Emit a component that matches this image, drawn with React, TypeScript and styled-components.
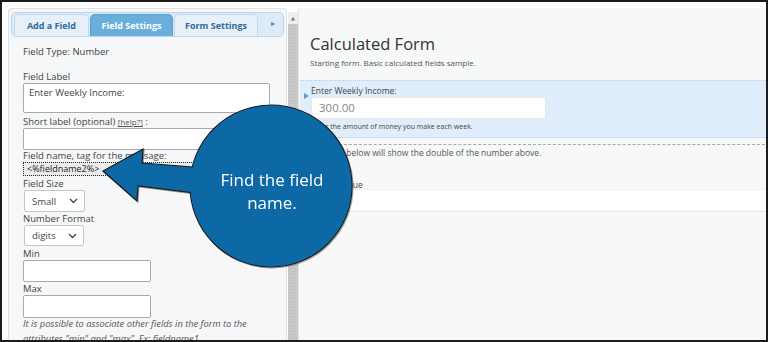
import styled, { createGlobalStyle } from "styled-components";

const GlobalStyle = createGlobalStyle`
  html, body {
    margin: 0;
    padding: 0;
    background: #fff;
  }
  * {
    box-sizing: border-box;
  }
`;

const tabs = [
  { label: "Add a Field", width: 75 },
  { label: "Field Settings", width: 83 },
  { label: "Form Settings", width: 84 },
];

export default function App() {
  return (
    <>
      <GlobalStyle />
      <Frame>
        <LeftPanel>
          <Builder>
            <TabBar>
              {tabs.map((t) => (
                <Tab key={t.label} $width={t.width} $active={t.label === "Field Settings"}>
                  {t.label}
                </Tab>
              ))}
              <TabArrow>▸</TabArrow>
            </TabBar>
            <Settings>
              <FieldType>Field Type: Number</FieldType>
              <Group $top={13}>
                <Label>Field Label</Label>
                <TextArea>Enter Weekly Income:</TextArea>
              </Group>
              <Group $top={3}>
                <Label>
                  Short label (optional) <HelpLink>[help?]</HelpLink> :
                </Label>
                <Input $width={247} $height={22} />
              </Group>
              <Group $top={0}>
                <Label>Field name, tag for the message:</Label>
                <TagBox>&lt;%fieldname2%&gt;</TagBox>
              </Group>
              <Group $top={2}>
                <Label>Field Size</Label>
                <Select $width={61} $height={22}>
                  Small
                  <Chevron />
                </Select>
              </Group>
              <Group $top={1}>
                <Label>Number Format</Label>
                <Select $width={60} $height={21}>
                  digits
                  <Chevron />
                </Select>
              </Group>
              <Group $top={2}>
                <Label>Min</Label>
                <Input $width={128} $height={22} />
              </Group>
              <Group $top={1}>
                <Label>Max</Label>
                <Input $width={128} $height={23} />
              </Group>
              <Note>
                It is possible to associate other fields in the form to the
                attributes "min" and "max". Ex: fieldname1
              </Note>
            </Settings>
          </Builder>
          <Scrollbar>
            <ScrollUp>▲</ScrollUp>
            <ScrollTrack />
          </Scrollbar>
        </LeftPanel>

        <Preview>
          <FormTitle>Calculated Form</FormTitle>
          <FormDesc>Starting form. Basic calculated fields sample.</FormDesc>
          <ActiveField>
            <FieldMarker />
            <PreviewLabel>Enter Weekly Income:</PreviewLabel>
            <PreviewInput>300.00</PreviewInput>
            <PreviewHelp>Enter the amount of money you make each week.</PreviewHelp>
          </ActiveField>
          <Separator />
          <PreviewText>
            The field below will show the double of the number above.
          </PreviewText>
          <PreviewLabel $top={20}>Double Value</PreviewLabel>
          <WideInput />
        </Preview>

        <Callout>
          <svg width="768" height="342" viewBox="0 0 768 342">
            <circle cx="271" cy="186" r="81" fill="#0c69a6" stroke="#1b1b1b" strokeWidth="1.2" />
            <polygon
              points="103,171 143,149 142,163 205,168 203,194 138,186 137,201"
              fill="#0c69a6"
              stroke="#1b1b1b"
              strokeWidth="1.2"
              strokeLinejoin="miter"
            />
            <circle cx="271" cy="186" r="80.4" fill="#0c69a6" />
          </svg>
          <CalloutText>
            Find the field
            <br />
            name.
          </CalloutText>
        </Callout>
      </Frame>
    </>
  );
}

const Frame = styled.div`
  position: relative;
  width: 768px;
  height: 342px;
  border: 2px solid #1c1c1c;
  background: #fff;
  display: flex;
  padding: 6px 0 0 6px;
  overflow: hidden;
  font-family: "Open Sans", "DejaVu Sans", sans-serif;
  color: #444;
`;

const LeftPanel = styled.div`
  width: 290px;
  display: flex;
  flex-shrink: 0;
`;

const Builder = styled.div`
  width: 279px;
  background: #f5f7f8;
  border: 1px solid #dde2e5;
  border-bottom: none;
  border-radius: 4px 4px 0 0;
  padding: 3px 2px 0 2px;
`;

const TabBar = styled.div`
  height: 25px;
  display: flex;
  align-items: flex-end;
  gap: 1px;
  padding: 0 0 0 2px;
  background: #dcebf7;
  border: 1px solid #bcd7ec;
  border-radius: 5px;
  position: relative;
`;

const Tab = styled.div<{ $active?: boolean; $width: number }>`
  width: ${(p) => p.$width}px;
  height: 22px;
  display: flex;
  align-items: center;
  justify-content: center;
  font-size: 9px;
  font-weight: 700;
  color: ${(p) => (p.$active ? "#fff" : "#2f6b9c")};
  background: ${(p) => (p.$active ? "#6aafdc" : "#e6f0f9")};
  border: 1px solid ${(p) => (p.$active ? "#5a9fcf" : "#c3daee")};
  border-bottom: none;
  border-radius: 5px 5px 0 0;
`;

const TabArrow = styled.span`
  position: absolute;
  right: 8px;
  top: 4px;
  font-size: 8px;
  color: #4f86b5;
`;

const Settings = styled.div`
  padding: 8px 0 0 12px;
  display: flex;
  flex-direction: column;
`;

const FieldType = styled.div`
  font-size: 9.5px;
  line-height: 13px;
`;

const Group = styled.div<{ $top: number }>`
  margin-top: ${(p) => p.$top}px;
  display: flex;
  flex-direction: column;
  align-items: flex-start;
`;

const Label = styled.div`
  font-size: 9.5px;
  line-height: 12px;
  color: #444;
`;

const HelpLink = styled.span`
  text-decoration: underline;
  font-size: 8px;
  color: #555;
`;

const TextArea = styled.div`
  width: 247px;
  height: 30px;
  background: #fff;
  border: 1px solid #a9a9a9;
  border-radius: 2px;
  padding: 2px 5px;
  font-size: 9.5px;
  color: #444;
`;

const Input = styled.div<{ $width: number; $height: number }>`
  width: ${(p) => p.$width}px;
  height: ${(p) => p.$height}px;
  background: #fff;
  border: 1px solid #a9a9a9;
  border-radius: 2px;
`;

const TagBox = styled.div`
  width: 247px;
  height: 14px;
  background: #eaebec;
  border: 1px dotted #222;
  padding: 0 3px;
  font-size: 9px;
  line-height: 12px;
  color: #222;
`;

const Select = styled.div<{ $width: number; $height: number }>`
  width: ${(p) => p.$width}px;
  height: ${(p) => p.$height}px;
  margin-left: 1px;
  background: #fff;
  border: 1px solid #c5c5c5;
  border-radius: 2px;
  display: flex;
  align-items: center;
  justify-content: space-between;
  padding: 0 6px 0 7px;
  font-size: 9.5px;
  color: #444;
`;

const Chevron = () => (
  <svg width="9" height="6" viewBox="0 0 9 6">
    <path d="M1 1 L4.5 4.5 L8 1" fill="none" stroke="#444" strokeWidth="1.3" />
  </svg>
);

const Note = styled.div`
  margin-top: -2px;
  font-size: 9.3px;
  line-height: 15px;
  font-style: italic;
  color: #555;
  width: 262px;
`;

const Scrollbar = styled.div`
  width: 10px;
  margin-left: 1px;
  margin-top: 4px;
  display: flex;
  flex-direction: column;
`;

const ScrollUp = styled.div`
  height: 12px;
  background: #eeeeee;
  font-size: 5px;
  color: #777;
  text-align: center;
  line-height: 12px;
`;

const ScrollTrack = styled.div`
  flex: 1;
  background-color: #c8c8c8;
  background-image: radial-gradient(#b8b8b8 0.6px, transparent 0.7px);
  background-size: 3px 3px;
`;

const Preview = styled.div`
  flex: 1;
  background: #f7f9f9;
  border-left: 1px solid #e3e7e9;
  padding: 25px 0 0 0;
  display: flex;
  flex-direction: column;
`;

const FormTitle = styled.div`
  padding-left: 11px;
  font-size: 16.5px;
  line-height: 22px;
  color: #333;
`;

const FormDesc = styled.div`
  padding-left: 11px;
  margin-top: 3px;
  font-size: 8px;
  line-height: 10px;
  color: #555;
`;

const ActiveField = styled.div`
  position: relative;
  margin: 12px 0 0 1px;
  height: 58px;
  flex-shrink: 0;
  background: #e0eefc;
  border-top: 1px dotted #b6d2ee;
  border-bottom: 1px solid #c4dbef;
  padding: 4px 0 0 11px;
  display: flex;
  flex-direction: column;
  align-items: flex-start;
`;

const FieldMarker = styled.div`
  position: absolute;
  left: 4px;
  top: 12px;
  width: 0;
  height: 0;
  border-top: 3px solid transparent;
  border-bottom: 3px solid transparent;
  border-left: 5px solid #5b9bd5;
`;

const PreviewLabel = styled.div<{ $top?: number }>`
  font-size: 8.5px;
  line-height: 11px;
  color: #444;
  margin-top: ${(p) => p.$top ?? 0}px;
  padding-left: ${(p) => (p.$top ? 11 : 0)}px;
`;

const PreviewInput = styled.div`
  margin-top: 1px;
  width: 235px;
  height: 22px;
  background: #fff;
  border: 1px solid #e4e8ec;
  padding: 0 7px;
  font-size: 11.5px;
  line-height: 20px;
  color: #888;
`;

const PreviewHelp = styled.div`
  margin-top: 3px;
  font-size: 7px;
  line-height: 10px;
  color: #444;
`;

const Separator = styled.div`
  margin-top: 6px;
  border-top: 1px dashed #a8a8a8;
  margin-right: -4px;
`;

const PreviewText = styled.div`
  margin-top: 2px;
  padding-left: 11px;
  font-size: 8.5px;
  line-height: 12px;
  color: #555;
`;

const WideInput = styled.div`
  margin: -1px 0 0 11px;
  height: 23px;
  background: #fff;
  border-top: 1px dotted #d8dadc;
  border-bottom: 1px solid #e3e5e7;
`;

const Callout = styled.div`
  position: absolute;
  left: -2px;
  top: -2px;
  width: 768px;
  height: 342px;
  pointer-events: none;
  filter: drop-shadow(1px 1px 0.5px rgba(0, 0, 0, 0.35));
`;

const CalloutText = styled.div`
  position: absolute;
  left: 191px;
  top: 168px;
  width: 162px;
  text-align: center;
  font-family: "Open Sans", "DejaVu Sans", sans-serif;
  font-size: 17px;
  line-height: 23px;
  color: #fff;
`;
